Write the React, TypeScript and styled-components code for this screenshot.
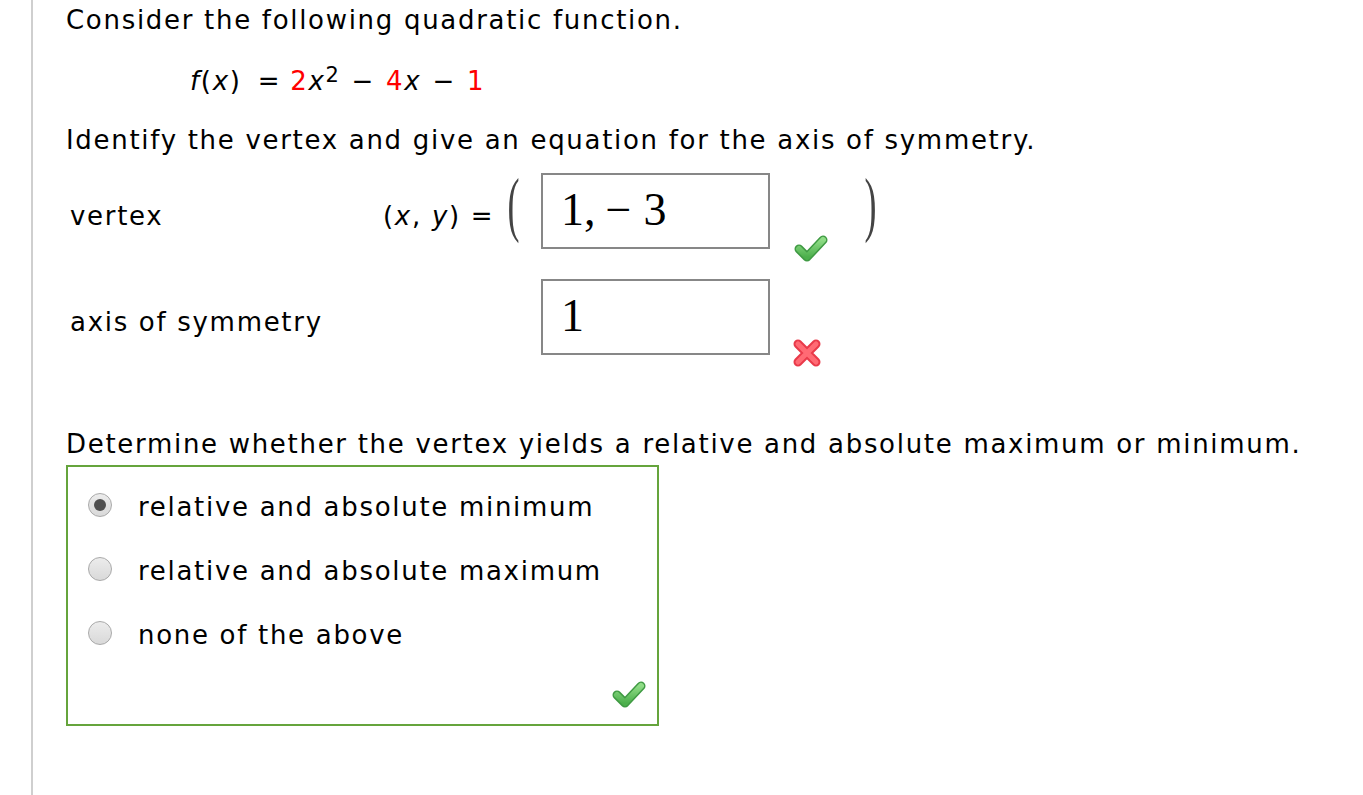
import styled, { createGlobalStyle } from "styled-components";

const GlobalStyle = createGlobalStyle`
  html, body {
    margin: 0;
    padding: 0;
    background: #fff;
  }
  body {
    font-family: "DejaVu Sans", Verdana, sans-serif;
    color: #000;
    letter-spacing: 1.7px;
  }
`;

const Page = styled.div`
  margin-left: 31px;
  min-height: 100vh;
  border-left: 2px solid #cfcfcf;
  padding: 4px 0 0 33px;
  box-sizing: border-box;
`;

const Text = styled.p<{ $top?: number }>`
  margin: ${(p) => p.$top ?? 0}px 0 0;
  font-size: 26px;
  line-height: 32px;
  white-space: nowrap;
`;

const Formula = styled(Text)`
  padding-left: 124px;
`;

const Red = styled.span`
  color: #f00;
`;

const It = styled.i`
  font-style: italic;
`;

const Op = styled.span<{ $l?: number; $r?: number }>`
  margin: 0 ${(p) => p.$r ?? 11}px 0 ${(p) => p.$l ?? 11}px;
`;

const Sup = styled.sup`
  font-size: 21px;
  line-height: 0;
  vertical-align: 0.4em;
`;

const AnswerRow = styled.div<{ $top: number }>`
  display: flex;
  align-items: baseline;
  margin-top: ${(p) => p.$top}px;
  padding-left: 4px;
`;

const RowLabel = styled.span`
  width: 313px;
  flex: none;
  font-size: 26px;
  line-height: 32px;
`;

const Prefix = styled.span`
  width: 158px;
  flex: none;
  display: flex;
  align-items: baseline;
  font-size: 26px;
  line-height: 32px;
`;

const Paren = styled.span<{ $right?: boolean }>`
  font-family: "Liberation Serif", "Times New Roman", serif;
  font-size: 72px;
  line-height: 30px;
  color: #444;
  transform: scaleX(0.5);
  display: inline-block;
  margin-left: ${(p) => (p.$right ? "30px" : "auto")};
  margin-right: ${(p) => (p.$right ? "0" : "14px")};
  position: relative;
  top: 3px;
`;

const Box = styled.div`
  width: 229px;
  height: 76px;
  box-sizing: border-box;
  border: 2px solid #878787;
  padding-left: 18px;
  font-family: "Liberation Serif", "Times New Roman", serif;
  font-size: 46px;
  line-height: 70px;
  letter-spacing: 0;
  white-space: nowrap;
`;

const Minus = styled.span`
  margin: 0 12px 0 10px;
`;

const Mark = styled.span<{ $shift?: number }>`
  align-self: flex-end;
  margin: 0 0 -13px ${(p) => 24 + (p.$shift ?? 0)}px;
  display: inline-flex;
`;

const ChoiceBox = styled.div`
  margin-top: 5px;
  width: 593px;
  box-sizing: border-box;
  border: 2px solid #65a43c;
  padding: 8px 0 16px;
`;

const Option = styled.label`
  display: flex;
  align-items: center;
  height: 64px;
  padding-left: 20px;
  font-size: 26px;
  line-height: 32px;
`;

const Radio = styled.span<{ $on?: boolean }>`
  width: 24px;
  height: 24px;
  box-sizing: border-box;
  border-radius: 50%;
  border: 1px solid #a9a9a9;
  background: linear-gradient(#ececec, #d9d9d9);
  margin-right: 26px;
  margin-top: -5px;
  display: flex;
  align-items: center;
  justify-content: center;
  flex: none;
  &::after {
    content: "";
    display: ${(p) => (p.$on ? "block" : "none")};
    width: 12px;
    height: 12px;
    border-radius: 50%;
    background: #505050;
  }
`;

const Footer = styled.div`
  display: flex;
  justify-content: flex-end;
  padding-right: 11px;
  margin-top: 13px;
`;

function Check() {
  return (
    <svg width="34" height="28" viewBox="0 0 34 28">
      <defs>
        <linearGradient id="cg" x1="0" y1="0" x2="0" y2="1">
          <stop offset="0" stopColor="#8fdc86" />
          <stop offset="1" stopColor="#4caf4c" />
        </linearGradient>
      </defs>
      <polyline points="5,15 13,23 29,6" fill="none" stroke="#3f9a43" strokeWidth="9" strokeLinecap="round" strokeLinejoin="round" />
      <polyline points="5,15 13,23 29,6" fill="none" stroke="url(#cg)" strokeWidth="6" strokeLinecap="round" strokeLinejoin="round" />
    </svg>
  );
}

function Cross() {
  return (
    <svg width="32" height="30" viewBox="0 0 32 30">
      <g strokeLinecap="round">
        <path d="M7 6 L25 24 M25 6 L7 24" stroke="#e93a4a" strokeWidth="9" />
        <path d="M7 6 L25 24 M25 6 L7 24" stroke="#ff6a74" strokeWidth="5" />
      </g>
    </svg>
  );
}

const options = [
  { text: "relative and absolute minimum", on: true },
  { text: "relative and absolute maximum", on: false },
  { text: "none of the above", on: false },
];

export default function App() {
  return (
    <Page>
      <GlobalStyle />
      <Text>Consider the following quadratic function.</Text>
      <Formula $top={29}>
        <It>f</It>(<It>x</It>)<Op $l={16} $r={9}>=</Op>
        <Red>2</Red>
        <It>x</It>
        <Sup>2</Sup>
        <Op>−</Op>
        <Red>4</Red>
        <It>x</It>
        <Op>−</Op>
        <Red>1</Red>
      </Formula>
      <Text $top={27}>Identify the vertex and give an equation for the axis of symmetry.</Text>
      <AnswerRow $top={17}>
        <RowLabel>vertex</RowLabel>
        <Prefix>
          <span>
            (<It>x</It>, <It>y</It>) =
          </span>
          <Paren>(</Paren>
        </Prefix>
        <Box>
          1,<Minus>−</Minus>3
        </Box>
        <Mark>
          <Check />
        </Mark>
        <Paren $right>)</Paren>
      </AnswerRow>
      <AnswerRow $top={30}>
        <RowLabel>axis of symmetry</RowLabel>
        <Prefix />
        <Box>1</Box>
        <Mark $shift={-3}>
          <Cross />
        </Mark>
      </AnswerRow>
      <Text $top={73}>Determine whether the vertex yields a relative and absolute maximum or minimum.</Text>
      <ChoiceBox>
        {options.map((o) => (
          <Option key={o.text}>
            <Radio $on={o.on} />
            {o.text}
          </Option>
        ))}
        <Footer>
          <Check />
        </Footer>
      </ChoiceBox>
    </Page>
  );
}
